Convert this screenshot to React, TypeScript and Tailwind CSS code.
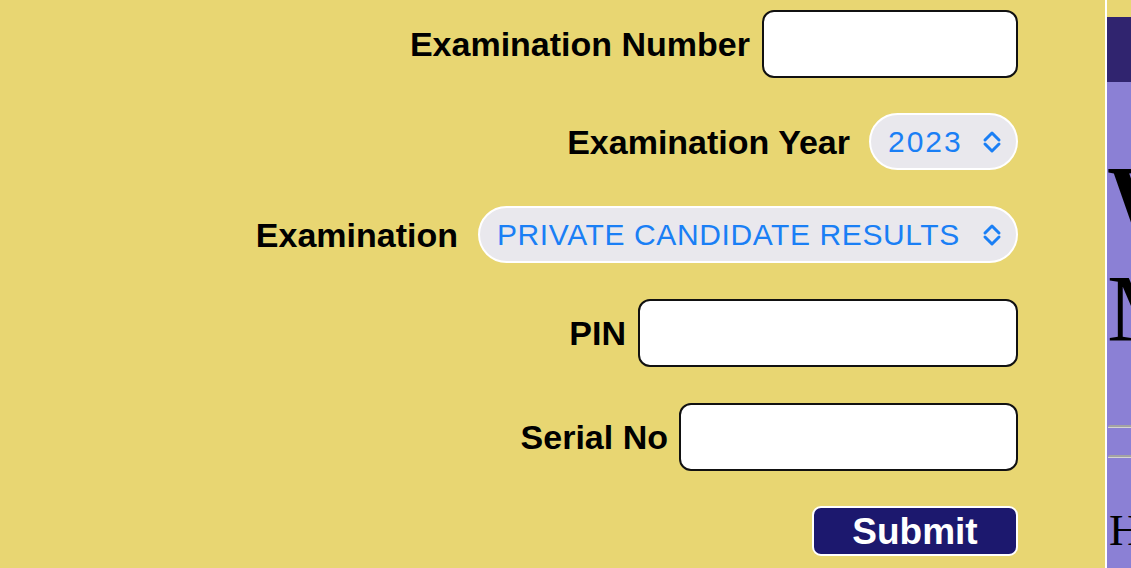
import type { ReactNode } from "react"

const LABEL = "font-['Liberation_Sans',Arial,sans-serif] text-[34px] font-bold text-black leading-none whitespace-nowrap"

function Chevrons() {
  return (
    <svg width="22" height="24" viewBox="0 0 22 24" fill="none" stroke="#1a7ff5" strokeWidth="3" strokeLinecap="round" strokeLinejoin="round">
      <path d="M4 10 L11 3 L18 10" />
      <path d="M4 14 L11 21 L18 14" />
    </svg>
  )
}

function Row({ label, gap, className, children }: { label: string; gap: string; className?: string; children: ReactNode }) {
  return (
    <div className={`flex items-center ${gap} ${className ?? ""}`}>
      <span className={LABEL}>{label}</span>
      {children}
    </div>
  )
}

function TextBox({ width }: { width: string }) {
  return <input type="text" className={`${width} h-[68px] rounded-[12px] border-2 border-[#111] bg-white outline-none`} />
}

function Select({ value, width, tracking }: { value: string; width: string; tracking?: string }) {
  return (
    <div className={`${width} h-[57px] rounded-full border-2 border-white bg-[#e9e8ed] flex items-center justify-between pl-[17px] pr-[13px]`}>
      <span className={`font-['Liberation_Sans',Arial,sans-serif] text-[30px] text-[#1a7ff5] leading-none whitespace-nowrap ${tracking ?? ""}`}>
        {value}
      </span>
      <Chevrons />
    </div>
  )
}

export default function App() {
  return (
    <div className="flex h-[568px] w-[1131px] overflow-hidden bg-[#e8d672]">
      <div className="flex-1 flex flex-col items-end pt-[10px] pr-[87px]">
        <Row label="Examination Number" gap="gap-[12px]">
          <TextBox width="w-[256px]" />
        </Row>
        <Row label="Examination Year" gap="gap-[19px]" className="mt-[35px]">
          <Select value="2023" width="w-[149px]" tracking="tracking-[2px]" />
        </Row>
        <Row label="Examination" gap="gap-[20px]" className="mt-[36px]">
          <Select value="PRIVATE CANDIDATE RESULTS" width="w-[540px]" tracking="tracking-[0.6px]" />
        </Row>
        <Row label="PIN" gap="gap-[12px]" className="mt-[36px]">
          <TextBox width="w-[380px]" />
        </Row>
        <Row label="Serial No" gap="gap-[11px]" className="mt-[36px]">
          <TextBox width="w-[339px]" />
        </Row>
        <button className="mt-[35px] w-[206px] h-[50px] rounded-[9px] border-2 border-white bg-[#1c186e] text-white font-['Liberation_Sans',Arial,sans-serif] font-bold text-[37px] leading-none">
          Submit
        </button>
      </div>

      <div className="w-[2px] bg-white" />

      <div className="w-[24px] flex flex-col overflow-hidden">
        <div className="h-[17px] bg-[#e8d672]" />
        <div className="h-[65px] bg-[#30246f]" />
        <div className="flex-1 bg-[#8b80d5] pt-[63px] font-['Liberation_Serif','Times_New_Roman',serif] text-black whitespace-nowrap">
          <div className="text-[96px] leading-[109px] font-bold">Welcome</div>
          <div className="text-[96px] leading-[109px]">Ministry</div>
          <div className="mt-[62px] ml-[1px] h-[3px] flex flex-col">
            <div className="h-[2px] bg-[#a3a3a3] rounded-tl-[3px]" />
            <div className="h-[1px] bg-[#d4d4d4]" />
          </div>
          <div className="mt-[27px] ml-[1px] h-[3px] flex flex-col">
            <div className="h-[2px] bg-[#a3a3a3] rounded-tl-[3px]" />
            <div className="h-[1px] bg-[#d4d4d4]" />
          </div>
          <div className="mt-[46px] text-[45px] leading-[52px] pl-[2px]">Home</div>
        </div>
      </div>
    </div>
  )
}
